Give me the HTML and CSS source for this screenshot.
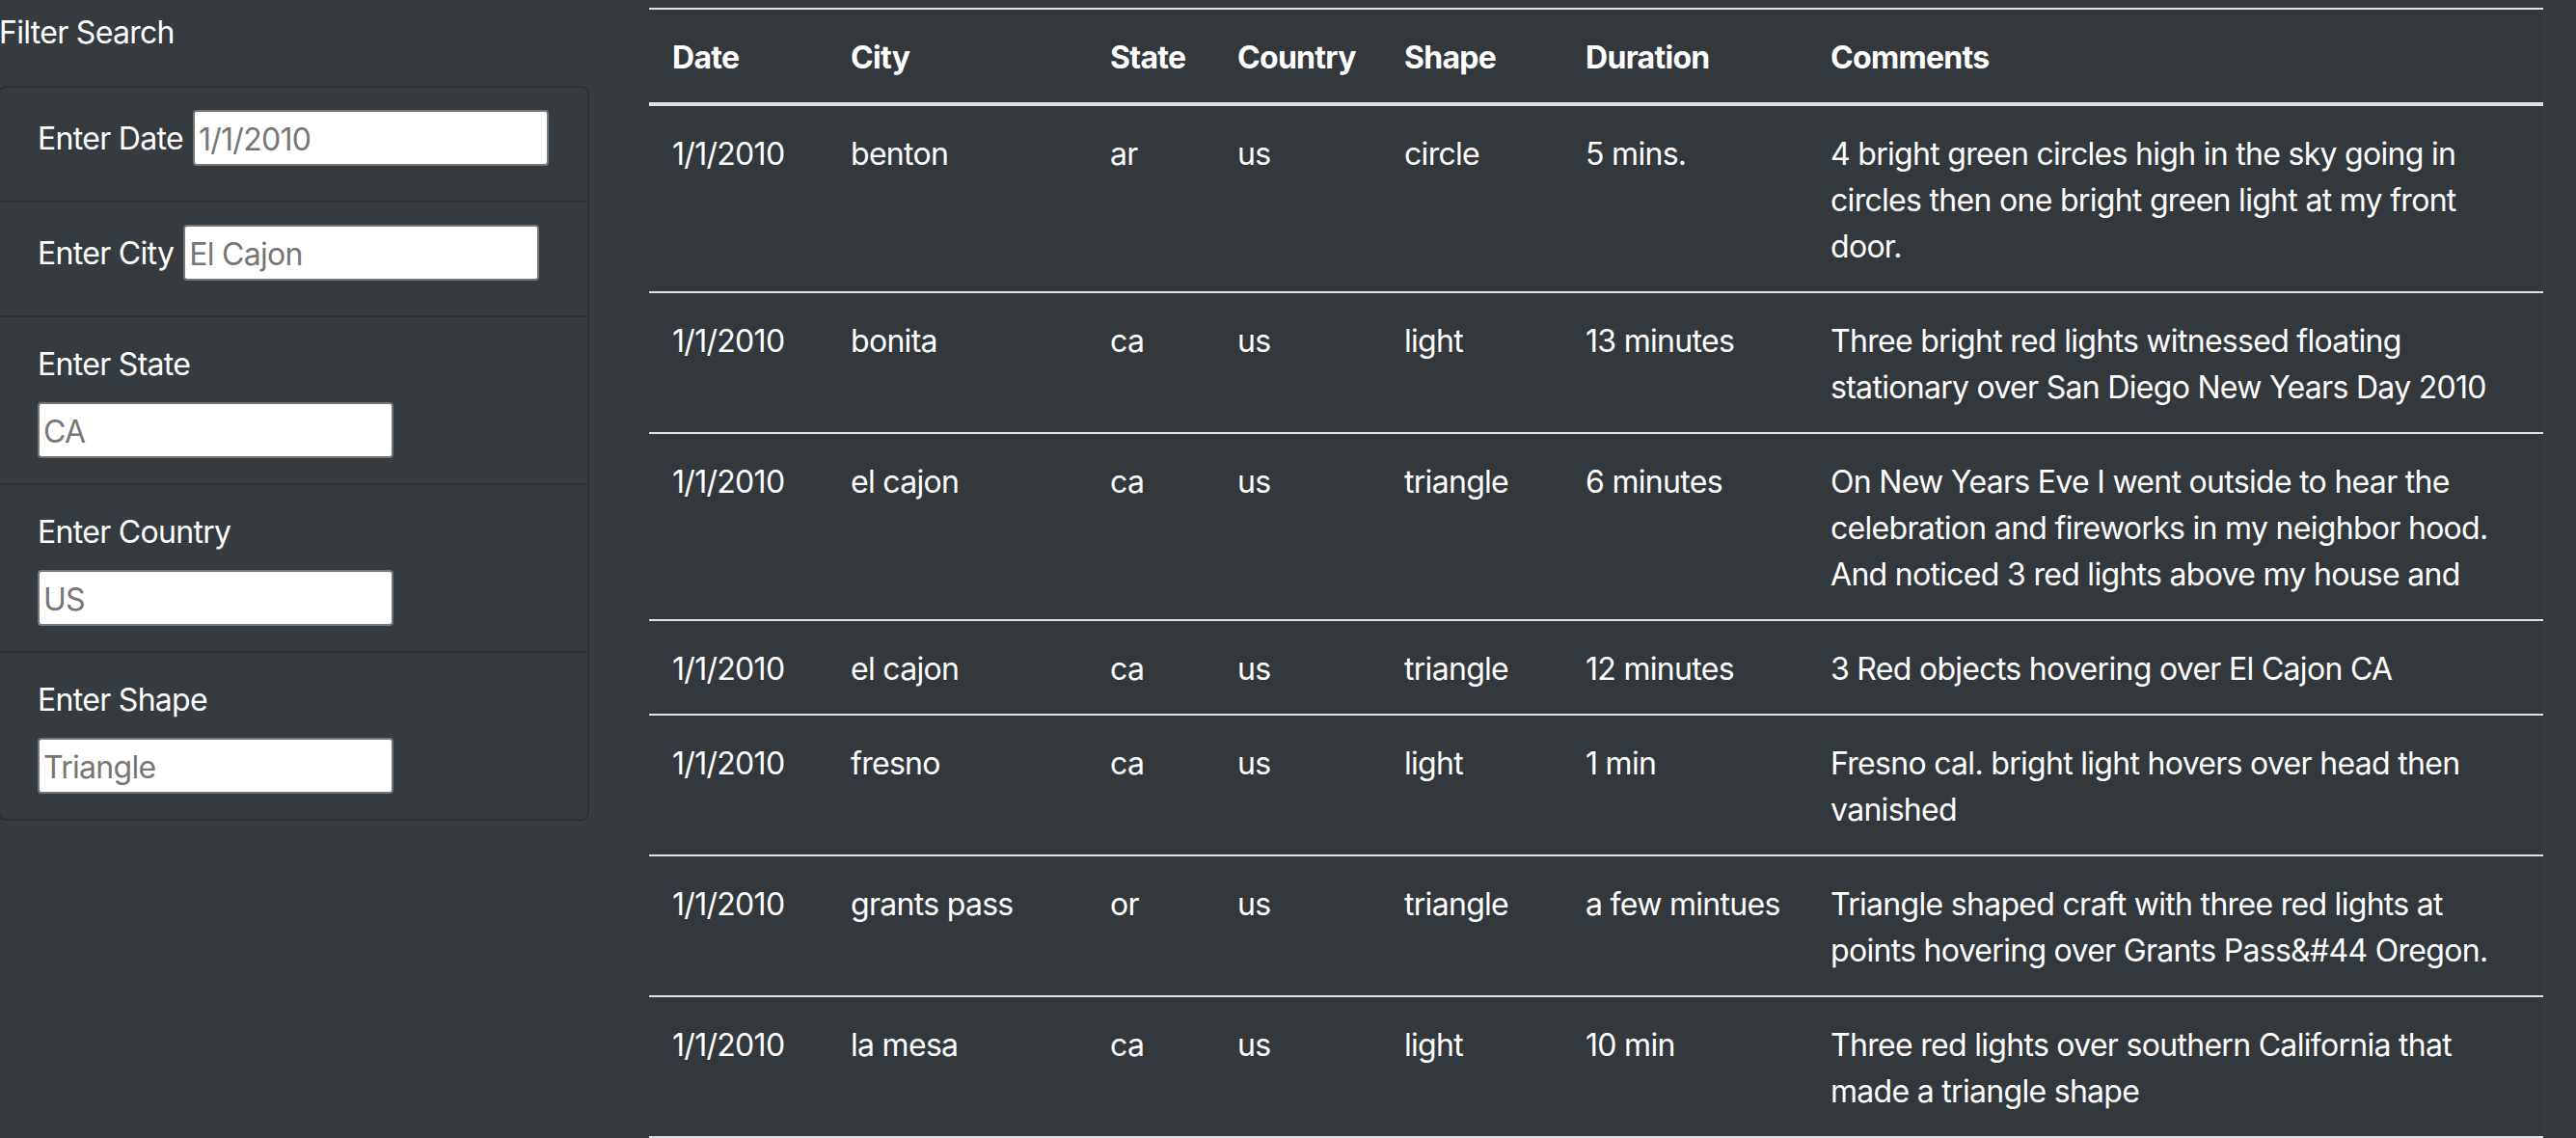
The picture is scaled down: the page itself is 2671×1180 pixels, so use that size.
FILE: index.html
```html
<!DOCTYPE html>
<html lang="en">
<head>
<meta charset="utf-8">
<title>UFO Sightings</title>
<link rel="stylesheet" href="styles.css">
</head>
<body>
<div class="page">
  <aside class="sidebar">
    <div class="filter-title">Filter Search</div>
    <ul class="filters">
      <li class="filter inline">
        <label for="datetime">Enter Date</label>
        <input class="field" id="datetime" type="text" placeholder="1/1/2010">
      </li>
      <li class="filter inline">
        <label for="city">Enter City</label>
        <input class="field" id="city" type="text" placeholder="El Cajon">
      </li>
      <li class="filter stacked">
        <label for="state">Enter State</label>
        <input class="field" id="state" type="text" placeholder="CA">
      </li>
      <li class="filter stacked">
        <label for="country">Enter Country</label>
        <input class="field" id="country" type="text" placeholder="US">
      </li>
      <li class="filter stacked">
        <label for="shape">Enter Shape</label>
        <input class="field" id="shape" type="text" placeholder="Triangle">
      </li>
    </ul>
  </aside>
  <main class="results">
    <table class="ufo-table">
      <colgroup>
        <col class="c-date">
        <col class="c-city">
        <col class="c-state">
        <col class="c-country">
        <col class="c-shape">
        <col class="c-duration">
        <col class="c-comments">
      </colgroup>
      <thead>
        <tr>
          <th>Date</th>
          <th>City</th>
          <th>State</th>
          <th>Country</th>
          <th>Shape</th>
          <th>Duration</th>
          <th>Comments</th>
        </tr>
      </thead>
      <tbody>
        <tr>
          <td>1/1/2010</td><td>benton</td><td>ar</td><td>us</td><td>circle</td><td>5 mins.</td>
          <td class="comment">4 bright green circles high in the sky going in circles then one bright green light at my front door.</td>
        </tr>
        <tr>
          <td>1/1/2010</td><td>bonita</td><td>ca</td><td>us</td><td>light</td><td>13 minutes</td>
          <td class="comment">Three bright red lights witnessed floating stationary over San Diego New Years Day 2010</td>
        </tr>
        <tr>
          <td>1/1/2010</td><td>el cajon</td><td>ca</td><td>us</td><td>triangle</td><td>6 minutes</td>
          <td class="comment">On New Years Eve I went outside to hear the celebration and fireworks in my neighbor hood. And noticed 3 red lights above my house and</td>
        </tr>
        <tr>
          <td>1/1/2010</td><td>el cajon</td><td>ca</td><td>us</td><td>triangle</td><td>12 minutes</td>
          <td class="comment">3 Red objects hovering over El Cajon CA</td>
        </tr>
        <tr>
          <td>1/1/2010</td><td>fresno</td><td>ca</td><td>us</td><td>light</td><td>1 min</td>
          <td class="comment">Fresno cal. bright light hovers over head then vanished</td>
        </tr>
        <tr>
          <td>1/1/2010</td><td>grants pass</td><td>or</td><td>us</td><td>triangle</td><td>a few mintues</td>
          <td class="comment">Triangle shaped craft with three red lights at points hovering over Grants Pass&amp;#44 Oregon.</td>
        </tr>
        <tr>
          <td>1/1/2010</td><td>la mesa</td><td>ca</td><td>us</td><td>light</td><td>10 min</td>
          <td class="comment">Three red lights over southern California that made a triangle shape</td>
        </tr>
      </tbody>
    </table>
  </main>
</div>
</body>
</html>
```

FILE: styles.css
```css
html, body {
  margin: 0;
  padding: 0;
}

body {
  background: #363b40;
  color: #ffffff;
  font-family: Inter, "Liberation Sans", Arial, sans-serif;
  font-size: 32px;
  line-height: 48px;
  letter-spacing: -0.7px;
  overflow: hidden;
}

.page {
  display: flex;
  align-items: flex-start;
  gap: 62px;
}

.sidebar {
  flex: 0 0 611px;
  width: 611px;
}

.filter-title {
  padding-top: 10px;
  margin-left: -1px;
  margin-bottom: 31px;
}

.filters {
  list-style: none;
  margin: 0 0 0 -2px;
  padding: 0;
  border: 2px solid #2c3035;
  border-radius: 8px;
}

.filter {
  padding-left: 39px;
  padding-right: 38px;
}

.filter + .filter {
  border-top: 2px solid #2c3035;
}

.filter.inline {
  display: flex;
  align-items: center;
  gap: 10px;
  padding-top: 23px;
  padding-bottom: 36px;
}

.filter.inline label {
  padding-top: 2px;
}

.filter.stacked {
  display: flex;
  flex-direction: column;
  align-items: flex-start;
  gap: 15px;
  padding-top: 24px;
  padding-bottom: 26px;
}

.filter.stacked label {
  padding-top: 1px;
}

.filter label {
  display: block;
  white-space: nowrap;
}

.field {
  box-sizing: border-box;
  width: 369px;
  height: 58px;
  margin: 0;
  padding: 2px 4px 0;
  border: 2px solid #767676;
  border-radius: 4px;
  background: #ffffff;
  color: #222;
  font-family: inherit;
  font-size: 32px;
  letter-spacing: -0.7px;
  outline: none;
}

.field::placeholder {
  color: #767676;
  opacity: 1;
}

.results {
  flex: 0 0 1964px;
  padding-top: 8px;
}

.ufo-table {
  width: 1964px;
  table-layout: fixed;
  border-collapse: separate;
  border-spacing: 0;
  background: #33383c;
}

.c-date { width: 185px; }
.c-city { width: 269px; }
.c-state { width: 132px; }
.c-country { width: 173px; }
.c-shape { width: 188px; }
.c-duration { width: 254px; }
.c-comments { width: 763px; }

.ufo-table th,
.ufo-table td {
  padding: 26px 24px 22px;
  text-align: left;
  vertical-align: top;
  white-space: nowrap;
}

.ufo-table th {
  font-weight: 700;
  border-top: 2px solid #dee2e6;
  border-bottom: 4px solid #dee2e6;
}

.ufo-table td {
  border-bottom: 2px solid #dee2e6;
}

.ufo-table td.comment {
  white-space: normal;
}
```
